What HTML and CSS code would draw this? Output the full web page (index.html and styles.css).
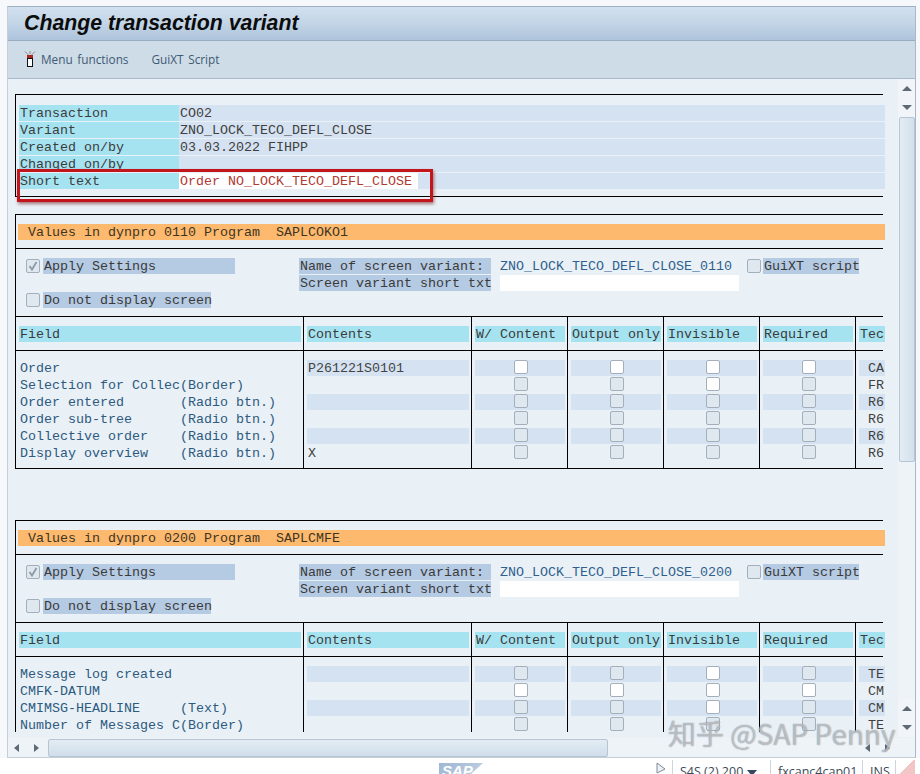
FILE: index.html
```html
<!DOCTYPE html>
<html lang="en">
<head>
<meta charset="utf-8">
<title>Change transaction variant</title>
<link rel="stylesheet" href="styles.css">
</head>
<body>
<div class="window">
  <header class="titlebar"><h1>Change transaction variant</h1></header>
  <nav class="toolbar">
    <span class="tool">
      <svg class="tool-icon" width="12" height="16" viewBox="0 0 12 16"><path d="M1 0.5l3.5 3.5M11 0.5L7.500 4M6 0v3" stroke="#8a8a8a" fill="none"/><rect x="3" y="4" width="6" height="3" fill="#a8281f"/><rect x="3.500" y="7.500" width="5" height="8" fill="#fff" stroke="#111"/></svg>
      Menu functions
    </span>
    <span class="tool">GuiXT Script</span>
  </nav>
  <div class="workarea">
    <main class="canvas">
      <section class="box head-box">
        <div class="info-row"><span class="info-label">Transaction</span><span class="info-value">CO02</span></div>
        <div class="info-row"><span class="info-label">Variant</span><span class="info-value">ZNO_LOCK_TECO_DEFL_CLOSE</span></div>
        <div class="info-row"><span class="info-label">Created on/by</span><span class="info-value">03.03.2022 FIHPP</span></div>
        <div class="info-row"><span class="info-label">Changed on/by</span><span class="info-value"></span></div>
        <div class="info-row"><span class="info-label">Short text</span><span class="info-value"><span class="short-input">Order NO_LOCK_TECO_DEFL_CLOSE</span></span></div>
      </section>
      <div class="redmark"></div>

      <section class="box dynpro first">
        <div class="orange">Values in dynpro 0110 Program  SAPLCOKO1</div>
        <div class="options">
          <div class="opt-left">
            <div class="opt"><span class="cb checked"><svg width="12" height="12" viewBox="0 0 12 12"><path d="M2.500 6l2.500 3.500L9.500 2" fill="none" stroke="#8e9aa6" stroke-width="1.800"/></svg></span><span class="lab lab-apply">Apply Settings</span></div>
            <div class="opt opt-last"><span class="cb"></span><span class="lab lab-dont">Do not display screen</span></div>
          </div>
          <div class="opt-right">
            <div class="var-row"><span class="lab lab-name">Name of screen variant:</span><span class="var-value">ZNO_LOCK_TECO_DEFL_CLOSE_0110</span><span class="cb cb-gui"></span><span class="lab lab-gui">GuiXT script</span></div>
            <div class="var-row"><span class="lab lab-name">Screen variant short txt</span><span class="var-input"></span></div>
          </div>
        </div>
        <div class="table">
          <div class="col col-field">
            <div class="col-head"><span>Field</span></div>
            <div class="col-body t6">
              <div class="cell">Order</div>
              <div class="cell">Selection for Collec(Border)</div>
              <div class="cell">Order entered       (Radio btn.)</div>
              <div class="cell">Order sub-tree      (Radio btn.)</div>
              <div class="cell">Collective order    (Radio btn.)</div>
              <div class="cell">Display overview    (Radio btn.)</div>
            </div>
          </div>
          <div class="col col-contents">
            <div class="col-head"><span>Contents</span></div>
            <div class="col-body t6">
              <div class="cell shade">P261221S0101</div>
              <div class="cell"></div>
              <div class="cell shade"></div>
              <div class="cell"></div>
              <div class="cell shade"></div>
              <div class="cell">X</div>
            </div>
          </div>
          <div class="col">
            <div class="col-head"><span>W/ Content</span></div>
            <div class="col-body t6">
              <div class="cell shade mid"><i class="cb white"></i></div>
              <div class="cell mid"><i class="cb"></i></div>
              <div class="cell shade mid"><i class="cb"></i></div>
              <div class="cell mid"><i class="cb"></i></div>
              <div class="cell shade mid"><i class="cb"></i></div>
              <div class="cell mid"><i class="cb"></i></div>
            </div>
          </div>
          <div class="col">
            <div class="col-head"><span>Output only</span></div>
            <div class="col-body t6">
              <div class="cell shade mid"><i class="cb white"></i></div>
              <div class="cell mid"><i class="cb"></i></div>
              <div class="cell shade mid"><i class="cb"></i></div>
              <div class="cell mid"><i class="cb"></i></div>
              <div class="cell shade mid"><i class="cb"></i></div>
              <div class="cell mid"><i class="cb"></i></div>
            </div>
          </div>
          <div class="col">
            <div class="col-head"><span>Invisible</span></div>
            <div class="col-body t6">
              <div class="cell shade mid"><i class="cb white"></i></div>
              <div class="cell mid"><i class="cb white"></i></div>
              <div class="cell shade mid"><i class="cb"></i></div>
              <div class="cell mid"><i class="cb"></i></div>
              <div class="cell shade mid"><i class="cb"></i></div>
              <div class="cell mid"><i class="cb"></i></div>
            </div>
          </div>
          <div class="col">
            <div class="col-head"><span>Required</span></div>
            <div class="col-body t6">
              <div class="cell shade mid"><i class="cb white"></i></div>
              <div class="cell mid"><i class="cb"></i></div>
              <div class="cell shade mid"><i class="cb"></i></div>
              <div class="cell mid"><i class="cb"></i></div>
              <div class="cell shade mid"><i class="cb"></i></div>
              <div class="cell mid"><i class="cb"></i></div>
            </div>
          </div>
          <div class="col col-tec">
            <div class="col-head"><span>Tec</span></div>
            <div class="col-body t6">
              <div class="cell shade">CA</div>
              <div class="cell">FR</div>
              <div class="cell shade">R6</div>
              <div class="cell">R6</div>
              <div class="cell shade">R6</div>
              <div class="cell">R6</div>
            </div>
          </div>
        </div>
      </section>

      <section class="box dynpro second">
        <div class="orange">Values in dynpro 0200 Program  SAPLCMFE</div>
        <div class="options">
          <div class="opt-left">
            <div class="opt"><span class="cb checked"><svg width="12" height="12" viewBox="0 0 12 12"><path d="M2.500 6l2.500 3.500L9.500 2" fill="none" stroke="#8e9aa6" stroke-width="1.800"/></svg></span><span class="lab lab-apply">Apply Settings</span></div>
            <div class="opt opt-last"><span class="cb"></span><span class="lab lab-dont">Do not display screen</span></div>
          </div>
          <div class="opt-right">
            <div class="var-row"><span class="lab lab-name">Name of screen variant:</span><span class="var-value">ZNO_LOCK_TECO_DEFL_CLOSE_0200</span><span class="cb cb-gui"></span><span class="lab lab-gui">GuiXT script</span></div>
            <div class="var-row"><span class="lab lab-name">Screen variant short txt</span><span class="var-input"></span></div>
          </div>
        </div>
        <div class="table">
          <div class="col col-field">
            <div class="col-head"><span>Field</span></div>
            <div class="col-body">
              <div class="cell">Message log created</div>
              <div class="cell">CMFK-DATUM</div>
              <div class="cell">CMIMSG-HEADLINE     (Text)</div>
              <div class="cell">Number of Messages C(Border)</div>
            </div>
          </div>
          <div class="col col-contents">
            <div class="col-head"><span>Contents</span></div>
            <div class="col-body">
              <div class="cell shade"></div>
              <div class="cell"></div>
              <div class="cell shade"></div>
              <div class="cell"></div>
            </div>
          </div>
          <div class="col">
            <div class="col-head"><span>W/ Content</span></div>
            <div class="col-body">
              <div class="cell shade mid"><i class="cb"></i></div>
              <div class="cell mid"><i class="cb white"></i></div>
              <div class="cell shade mid"><i class="cb"></i></div>
              <div class="cell mid"><i class="cb"></i></div>
            </div>
          </div>
          <div class="col">
            <div class="col-head"><span>Output only</span></div>
            <div class="col-body">
              <div class="cell shade mid"><i class="cb"></i></div>
              <div class="cell mid"><i class="cb white"></i></div>
              <div class="cell shade mid"><i class="cb"></i></div>
              <div class="cell mid"><i class="cb"></i></div>
            </div>
          </div>
          <div class="col">
            <div class="col-head"><span>Invisible</span></div>
            <div class="col-body">
              <div class="cell shade mid"><i class="cb white"></i></div>
              <div class="cell mid"><i class="cb white"></i></div>
              <div class="cell shade mid"><i class="cb white"></i></div>
              <div class="cell mid"><i class="cb"></i></div>
            </div>
          </div>
          <div class="col">
            <div class="col-head"><span>Required</span></div>
            <div class="col-body">
              <div class="cell shade mid"><i class="cb"></i></div>
              <div class="cell mid"><i class="cb white"></i></div>
              <div class="cell shade mid"><i class="cb"></i></div>
              <div class="cell mid"><i class="cb"></i></div>
            </div>
          </div>
          <div class="col col-tec">
            <div class="col-head"><span>Tec</span></div>
            <div class="col-body">
              <div class="cell shade">TE</div>
              <div class="cell">CM</div>
              <div class="cell shade">CM</div>
              <div class="cell">TE</div>
            </div>
          </div>
        </div>
      </section>
    </main>
    <aside class="vscroll">
      <div class="vbtn"><i class="arr up"></i></div>
      <div class="vbtn"><i class="arr down"></i></div>
      <div class="vthumb"><span class="grip"></span></div>
      <div class="vtrack"></div>
      <div class="vbtn low"><i class="arr up"></i></div>
      <div class="vbtn low"><i class="arr down"></i></div>
    </aside>
  </div>
  <div class="hscroll">
    <i class="arr left"></i>
    <i class="arr right"></i>
    <div class="hthumb"><span class="grip"></span></div>
    <i class="arr left end"></i>
    <i class="arr right"></i>
  </div>
</div>
<footer class="status">
  <div class="sap-logo"><span>SAP</span></div>
  <div class="status-right">
    <svg class="st-flag" width="12" height="14" viewBox="0 0 12 14"><path d="M2 2l8 6-8 4z" fill="#eef2f6" stroke="#7d8b99"/></svg>
    <span class="st-item st-sys">S4S (2) 200 <i class="st-caret"></i></span>
    <span class="st-item st-host">fxcanc4cap01</span>
    <span class="st-item st-ins">INS</span>
    <span class="st-item st-end"></span>
  </div>
</footer>
<div class="watermark">知乎 @SAP Penny</div>
</body>
</html>
```
FILE: styles.css
```css
* { box-sizing: border-box; }
html, body { margin: 0; padding: 0; height: 774px; overflow: hidden; }
body {
  position: relative;
  background: #f6f8fb;
  font-family: "Liberation Mono", "Courier New", monospace;
  font-size: 13.33px;
  color: #3a3a3a;
  padding-top: 6px;
}
.window {
  margin-left: 7px;
  width: 909px;
  height: 752px;
  border-left: 1px solid #c3ced9;
  border-right: 1px solid #a9b8c7;
  border-top: 1px solid #9fb0c2;
  border-bottom: 1px solid #c3ced9;
  background: #e9f0f6;
  display: flex;
  flex-direction: column;
}
.titlebar {
  height: 34px;
  background: linear-gradient(#d2e0ef 0%, #c4d6e7 45%, #aec4dc 100%);
  border-bottom: 1px solid #99adc2;
  display: flex;
  align-items: center;
  padding-left: 16px;
  flex: none;
}
.titlebar h1 {
  margin: 0;
  font: italic bold 21.3px "Liberation Sans", Arial, sans-serif;
  color: #0c0c0c;
}
.toolbar {
  height: 38px;
  flex: none;
  background: #cedce8;
  border-bottom: 1px solid #a7b9ca;
  display: flex;
  align-items: center;
  padding: 0 0 2px 16px;
  gap: 23px;
  font: 11.8px "Open Sans", "Liberation Sans", sans-serif;
  word-spacing: 1.5px;
  color: #3f5a72;
}
.tool { display: inline-flex; align-items: center; gap: 5px; }
.workarea { flex: 1; display: flex; min-height: 0; }
.canvas {
  width: 890px;
  height: 653px;
  padding: 15px 0 0 7px;
  overflow: hidden;
  flex: none;
  position: relative;
}
.box {
  width: 868px;
  border-top: 1px solid #000;
  border-left: 1px solid #000;
}
.head-box {
  border-bottom: 1px solid #000;
  padding: 10px 0 6px 3px;
}
.info-row {
  height: 16px;
  margin: 0 -2px 1px 0;
  display: flex;
  line-height: 17px;
  white-space: pre;
}
.info-label { width: 160px; background: #a6e3f1; padding-left: 1px; color: #3c3c3c; flex: none; }
.info-value { flex: 1; background: #d5e2f1; padding-left: 1px; color: #404040; }
.short-input {
  display: block;
  width: 239px;
  height: 16px;
  margin-left: -1px;
  padding-left: 1px;
  background: #fff;
  color: #b03a32;
}
.redmark {
  position: absolute;
  left: 9px;
  top: 90px;
  width: 416px;
  height: 33px;
  border: 3px solid #c3161c;
  box-shadow: 1px 2px 3px rgba(110, 20, 20, .55);
}
.first { margin-top: 17px; }
.second { margin-top: 51px; }
.dynpro { padding-top: 9px; }
.orange {
  height: 16px;
  margin: 0 -2px 8px 2px;
  padding-left: 10px;
  background: #fdb96d;
  line-height: 17px;
  color: #3d3524;
  white-space: pre;
}
.options {
  border-top: 1px solid #000;
  padding: 9px 0 7px 0;
  display: flex;
  height: 68px;
}
.opt-left { width: 283px; padding-left: 10px; flex: none; }
.opt { display: flex; align-items: flex-start; height: 17px; white-space: pre; }
.opt-last { margin-top: 17px; }
.opt-right { flex: 1; min-width: 0; }
.var-row { display: flex; height: 17px; white-space: pre; }
.cb {
  display: block;
  width: 14px;
  height: 14px;
  border: 1px solid #a3afba;
  border-radius: 2px;
  background: #dfe7ef;
  flex: none;
}
.cb.checked svg { display: block; }
.opt > .cb { margin-top: 1px; }
.cb.white { background: #fff; }
.lab {
  display: block;
  height: 16px;
  line-height: 17px;
  background: #b5cae3;
  color: #3a3a3a;
  padding-left: 1px;
  flex: none;
}
.lab-apply { margin-left: 3px; width: 192px; }
.lab-dont { margin-left: 3px; width: 168px; }
.lab-name { width: 192px; }
.var-value { margin-left: 9px; width: 239px; line-height: 17px; color: #2f5f8e; flex: none; }
.var-input { margin-left: 9px; width: 239px; height: 16px; background: #fff; flex: none; }
.cb-gui { margin-left: 8px; margin-top: 1px; }
.lab-gui { margin-left: 2px; width: 96px; }
.table {
  display: flex;
  border-top: 1px solid #000;
  border-bottom: 1px solid #000;
  margin-left: -1px;
}
.second .table { border-bottom: 0; }
.col {
  width: 96px;
  flex: none;
  border-left: 1px solid #000;
}
.col-field { width: 288px; }
.col-contents { width: 168px; }
.col-tec { width: 28px; }
.col-head {
  height: 34px;
  padding: 9px 2px 8px 3px;
  border-bottom: 1px solid #000;
  white-space: pre;
}
.col-tec .col-head { padding-right: 0; margin-right: -2px; border-bottom: 0; position: relative; }
.col-tec .col-head::after {
  content: "";
  position: absolute;
  left: 0;
  right: 2px;
  bottom: 0;
  border-bottom: 1px solid #000;
}
.col-head span {
  display: block;
  height: 16px;
  line-height: 17px;
  background: #a6e3f1;
  padding-left: 1px;
  color: #3a3a3a;
}
.col-body { padding: 9px 2px 0 3px; height: 79px; }
.col-body.t6 { height: 117px; }
.col-tec .col-body { padding-right: 0; margin-right: -2px; }
.cell {
  height: 17px;
  line-height: 17px;
  padding-left: 1px;
  white-space: pre;
  overflow: hidden;
  color: #444;
}
.col-field .cell { color: #2c5a80; }
.shade {
  background: linear-gradient(#d5e2f1, #d5e2f1) top / 100% 16px no-repeat;
}
.col-tec .cell { padding-left: 9px; color: #3f3f3f; }
.mid { padding-left: 2px; display: flex; justify-content: center; }
.vscroll {
  width: 17px;
  height: 658px;
  flex: none;
  display: flex;
  flex-direction: column;
  background: #eef3f8;
}
.vbtn { height: 19px; display: flex; align-items: center; justify-content: center; flex: none; background: #f1f5f9; }
.vthumb {
  height: 345px;
  flex: none;
  margin: 0 0 0 1px;
  border: 1px solid #b7c5d3;
  border-radius: 2px;
  background: linear-gradient(90deg, #e3ecf4, #d3e0ec);
  display: flex;
  align-items: center;
  justify-content: center;
}
.vtrack { flex: 1; }
.arr { display: block; width: 0; height: 0; }
.up { border: 5px solid transparent; border-top: 0; border-bottom: 5px solid #5d6975; }
.down { border: 5px solid transparent; border-bottom: 0; border-top: 5px solid #5d6975; }
.left { border: 4px solid transparent; border-left: 0; border-right: 5px solid #5d6975; }
.right { border: 4px solid transparent; border-right: 0; border-left: 5px solid #5d6975; }
.grip {
  display: block;
  width: 7px;
  height: 7px;
  background-image: radial-gradient(#9aa7b3 35%, transparent 40%);
  background-size: 2px 2px;
}
.hscroll {
  height: 19px;
  flex: none;
  margin-top: auto;
  display: flex;
  align-items: center;
  padding-left: 6px;
  background: #eef3f8;
}
.hscroll .right { margin-left: 15px; }
.hthumb {
  width: 560px;
  height: 18px;
  margin-left: 9px;
  border: 1px solid #b7c5d3;
  border-radius: 2px;
  background: linear-gradient(#e3ecf4, #d0deea);
  display: flex;
  align-items: center;
  justify-content: center;
}
.hscroll .end { margin-left: 257px; }
.status {
  height: 16px;
  position: relative;
  display: flex;
  overflow: hidden;
  background: #fff;
}
.sap-logo {
  margin: 5px 0 0 439px;
  width: 44px;
  height: 20px;
  background: linear-gradient(135deg, #9fb7d2, #c3d3e4);
  clip-path: polygon(0 0, 100% 0, 50% 100%, 0 100%);
  color: #fff;
  font: italic bold 15px "Liberation Sans", sans-serif;
  padding-left: 3px;
  line-height: 16px;
}
.status-right {
  position: absolute;
  left: 655px;
  top: 2px;
  display: flex;
  align-items: flex-start;
  font: 12.5px "Open Sans", "Liberation Sans", sans-serif;
  color: #3c4a57;
}
.st-flag { margin-right: 5px; margin-top: 1px; }
.st-item { padding: 3px 0 0 7px; border-left: 1px solid #ccd4dc; height: 16px; white-space: pre; }
.st-sys { width: 98px; }
.st-host { width: 92px; }
.st-ins { width: 33px; }
.st-end { width: 20px; background: linear-gradient(135deg, #fff 50%, #f3c6c6 50%); }
.st-caret {
  display: inline-block;
  border: 5px solid transparent;
  border-bottom: 0;
  border-top: 6px solid #33495f;
}
.watermark {
  position: absolute;
  left: 668px;
  top: 713px;
  white-space: nowrap;
  font: 28px "Noto Sans CJK SC", "Noto Sans", sans-serif;
  color: rgba(255, 255, 255, .55);
  text-shadow: 0 0 1px rgba(70, 80, 90, .85);
}
```
